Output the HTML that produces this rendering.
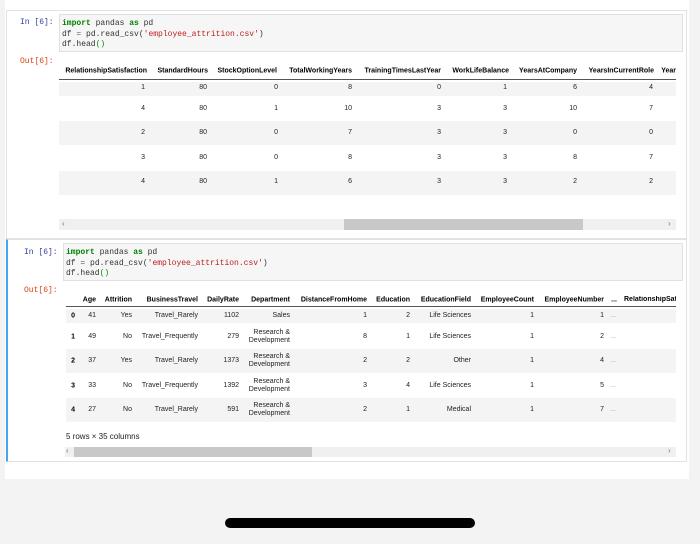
<!DOCTYPE html>
<html><head><meta charset="utf-8">
<style>
*{margin:0;padding:0;box-sizing:border-box}
body{width:700px;height:544px;background:#f3f3f3;position:relative;overflow:hidden;font-family:"Liberation Sans Narrow","Liberation Sans",sans-serif;}
.page{position:absolute;left:5px;top:0;width:684px;height:479px;background:#fff}
.a{position:absolute;white-space:nowrap}
.r{position:absolute;white-space:nowrap;transform:translate(-100%,-50%);font-size:7px;color:#222;text-align:right;line-height:8px}
.h{position:absolute;white-space:nowrap;transform:translate(-100%,-50%);font-size:7px;font-weight:bold;color:#000}
.mono{font-family:"Liberation Mono",monospace;font-size:8px;color:#333;line-height:10.5px}
.prompt{font-family:"Liberation Mono",monospace;font-size:8px;color:#303f9f}
.out{font-family:"Liberation Mono",monospace;font-size:8px;color:#d84315}
.k{color:#008000;font-weight:bold}
.s{color:#ba2121}
.p{color:#0a8a0a}
.gray{position:absolute;background:#f4f4f4}
</style></head><body>
<div class="page"></div>
<!-- cell 1 -->
<div class="a" style="left:6px;top:10px;width:681px;height:229px;border:1px solid #e2e2e2"></div>
<div class="a prompt" style="left:20px;top:18px">In [6]:</div>
<div class="a" style="left:59px;top:14px;width:624px;height:38px;background:#f6f6f6;border:1px solid #e0e0e0"></div>
<div class="a mono" style="left:62px;top:19px"><span class="k">import</span> pandas <span class="k">as</span> pd<br>df <span style="color:#666">=</span> pd.read_csv(<span class="s">'employee_attrition.csv'</span>)<br>df.head<span class="p">()</span></div>
<div class="a out" style="left:20px;top:57px">Out[6]:</div>
<div class="gray" style="left:59px;top:82px;width:617px;height:14px"></div>
<div class="gray" style="left:59px;top:121px;width:617px;height:24px"></div>
<div class="gray" style="left:59px;top:171px;width:617px;height:24px"></div>
<div class="a" style="left:59px;top:79px;width:617px;height:1px;background:#555"></div>
<div class="h" style="left:147px;top:71px">RelationshipSatisfaction</div>
<div class="h" style="left:208px;top:71px">StandardHours</div>
<div class="h" style="left:277px;top:71px">StockOptionLevel</div>
<div class="h" style="left:352px;top:71px">TotalWorkingYears</div>
<div class="h" style="left:441px;top:71px">TrainingTimesLastYear</div>
<div class="h" style="left:509px;top:71px">WorkLifeBalance</div>
<div class="h" style="left:577px;top:71px">YearsAtCompany</div>
<div class="h" style="left:654px;top:71px">YearsInCurrentRole</div>
<div class="h" style="left:676px;top:71px">Year</div>
<div class="r" style="left:145px;top:88px">1</div><div class="r" style="left:207px;top:88px">80</div><div class="r" style="left:278px;top:88px">0</div><div class="r" style="left:352px;top:88px">8</div><div class="r" style="left:441px;top:88px">0</div><div class="r" style="left:507px;top:88px">1</div><div class="r" style="left:577px;top:88px">6</div><div class="r" style="left:653px;top:88px">4</div>
<div class="r" style="left:145px;top:109px">4</div><div class="r" style="left:207px;top:109px">80</div><div class="r" style="left:278px;top:109px">1</div><div class="r" style="left:352px;top:109px">10</div><div class="r" style="left:441px;top:109px">3</div><div class="r" style="left:507px;top:109px">3</div><div class="r" style="left:577px;top:109px">10</div><div class="r" style="left:653px;top:109px">7</div>
<div class="r" style="left:145px;top:133px">2</div><div class="r" style="left:207px;top:133px">80</div><div class="r" style="left:278px;top:133px">0</div><div class="r" style="left:352px;top:133px">7</div><div class="r" style="left:441px;top:133px">3</div><div class="r" style="left:507px;top:133px">3</div><div class="r" style="left:577px;top:133px">0</div><div class="r" style="left:653px;top:133px">0</div>
<div class="r" style="left:145px;top:158px">3</div><div class="r" style="left:207px;top:158px">80</div><div class="r" style="left:278px;top:158px">0</div><div class="r" style="left:352px;top:158px">8</div><div class="r" style="left:441px;top:158px">3</div><div class="r" style="left:507px;top:158px">3</div><div class="r" style="left:577px;top:158px">8</div><div class="r" style="left:653px;top:158px">7</div>
<div class="r" style="left:145px;top:182px">4</div><div class="r" style="left:207px;top:182px">80</div><div class="r" style="left:278px;top:182px">1</div><div class="r" style="left:352px;top:182px">6</div><div class="r" style="left:441px;top:182px">3</div><div class="r" style="left:507px;top:182px">3</div><div class="r" style="left:577px;top:182px">2</div><div class="r" style="left:653px;top:182px">2</div>
<div class="a" style="left:59px;top:219px;width:617px;height:11px;background:#f0f0f0"></div>
<div class="a" style="left:344px;top:219px;width:239px;height:11px;background:#c8c8c8"></div>
<div class="a" style="left:62px;top:219px;font-size:8px;color:#777">‹</div>
<div class="a" style="left:668px;top:219px;font-size:8px;color:#777">›</div>
<!-- cell 2 -->
<div class="a" style="left:6px;top:239px;width:681px;height:223px;border:1px solid #e2e2e2;border-left:2px solid #42a5f5"></div>
<div class="a prompt" style="left:24px;top:248px">In [6]:</div>
<div class="a" style="left:63px;top:243px;width:620px;height:38px;background:#f6f6f6;border:1px solid #e0e0e0"></div>
<div class="a mono" style="left:66px;top:248px"><span class="k">import</span> pandas <span class="k">as</span> pd<br>df <span style="color:#666">=</span> pd.read_csv(<span class="s">'employee_attrition.csv'</span>)<br>df.head<span class="p">()</span></div>
<div class="a out" style="left:24px;top:286px">Out[6]:</div>
<div class="gray" style="left:66px;top:309px;width:610px;height:14px"></div>
<div class="gray" style="left:66px;top:349px;width:610px;height:24px"></div>
<div class="gray" style="left:66px;top:398px;width:610px;height:24px"></div>
<div class="a" style="left:66px;top:306px;width:610px;height:1px;background:#555"></div>
<div class="h" style="left:96px;top:300px">Age</div>
<div class="h" style="left:132px;top:300px">Attrition</div>
<div class="h" style="left:198px;top:300px">BusinessTravel</div>
<div class="h" style="left:239px;top:300px">DailyRate</div>
<div class="h" style="left:290px;top:300px">Department</div>
<div class="h" style="left:367px;top:300px">DistanceFromHome</div>
<div class="h" style="left:410px;top:300px">Education</div>
<div class="h" style="left:471px;top:300px">EducationField</div>
<div class="h" style="left:534px;top:300px">EmployeeCount</div>
<div class="h" style="left:604px;top:300px">EmployeeNumber</div>
<div class="h" style="left:617px;top:300px">...</div>
<div class="a" style="left:624px;top:296px;width:52px;overflow:hidden;font-size:7px;font-weight:bold">RelationshipSatisfaction</div>
<div class="h" style="left:75px;top:316px">0</div><div class="r" style="left:96px;top:316px">41</div><div class="r" style="left:132px;top:316px">Yes</div><div class="r" style="left:198px;top:316px">Travel_Rarely</div><div class="r" style="left:239px;top:316px">1102</div><div class="r" style="left:290px;top:316px">Sales</div><div class="r" style="left:367px;top:316px">1</div><div class="r" style="left:410px;top:316px">2</div><div class="r" style="left:471px;top:316px">Life Sciences</div><div class="r" style="left:534px;top:316px">1</div><div class="r" style="left:604px;top:316px">1</div><div class="r" style="left:616px;top:316px;color:#999">...</div>
<div class="h" style="left:75px;top:337px">1</div><div class="r" style="left:96px;top:337px">49</div><div class="r" style="left:132px;top:337px">No</div><div class="r" style="left:198px;top:337px">Travel_Frequently</div><div class="r" style="left:239px;top:337px">279</div><div class="r" style="left:290px;top:337px">Research &amp;<br>Development</div><div class="r" style="left:367px;top:337px">8</div><div class="r" style="left:410px;top:337px">1</div><div class="r" style="left:471px;top:337px">Life Sciences</div><div class="r" style="left:534px;top:337px">1</div><div class="r" style="left:604px;top:337px">2</div><div class="r" style="left:616px;top:337px;color:#999">...</div>
<div class="h" style="left:75px;top:361px">2</div><div class="r" style="left:96px;top:361px">37</div><div class="r" style="left:132px;top:361px">Yes</div><div class="r" style="left:198px;top:361px">Travel_Rarely</div><div class="r" style="left:239px;top:361px">1373</div><div class="r" style="left:290px;top:361px">Research &amp;<br>Development</div><div class="r" style="left:367px;top:361px">2</div><div class="r" style="left:410px;top:361px">2</div><div class="r" style="left:471px;top:361px">Other</div><div class="r" style="left:534px;top:361px">1</div><div class="r" style="left:604px;top:361px">4</div><div class="r" style="left:616px;top:361px;color:#999">...</div>
<div class="h" style="left:75px;top:386px">3</div><div class="r" style="left:96px;top:386px">33</div><div class="r" style="left:132px;top:386px">No</div><div class="r" style="left:198px;top:386px">Travel_Frequently</div><div class="r" style="left:239px;top:386px">1392</div><div class="r" style="left:290px;top:386px">Research &amp;<br>Development</div><div class="r" style="left:367px;top:386px">3</div><div class="r" style="left:410px;top:386px">4</div><div class="r" style="left:471px;top:386px">Life Sciences</div><div class="r" style="left:534px;top:386px">1</div><div class="r" style="left:604px;top:386px">5</div><div class="r" style="left:616px;top:386px;color:#999">...</div>
<div class="h" style="left:75px;top:410px">4</div><div class="r" style="left:96px;top:410px">27</div><div class="r" style="left:132px;top:410px">No</div><div class="r" style="left:198px;top:410px">Travel_Rarely</div><div class="r" style="left:239px;top:410px">591</div><div class="r" style="left:290px;top:410px">Research &amp;<br>Development</div><div class="r" style="left:367px;top:410px">2</div><div class="r" style="left:410px;top:410px">1</div><div class="r" style="left:471px;top:410px">Medical</div><div class="r" style="left:534px;top:410px">1</div><div class="r" style="left:604px;top:410px">7</div><div class="r" style="left:616px;top:410px;color:#999">...</div>
<div class="a" style="left:66px;top:432px;font-size:8px;color:#222">5 rows × 35 columns</div>
<div class="a" style="left:65px;top:447px;width:611px;height:10px;background:#f0f0f0"></div>
<div class="a" style="left:74px;top:447px;width:238px;height:10px;background:#c8c8c8"></div>
<div class="a" style="left:66px;top:446px;font-size:8px;color:#777">‹</div>
<div class="a" style="left:668px;top:446px;font-size:8px;color:#777">›</div>
<div class="a" style="left:225px;top:518px;width:250px;height:10px;border-radius:5px;background:#000"></div>
</body></html>
